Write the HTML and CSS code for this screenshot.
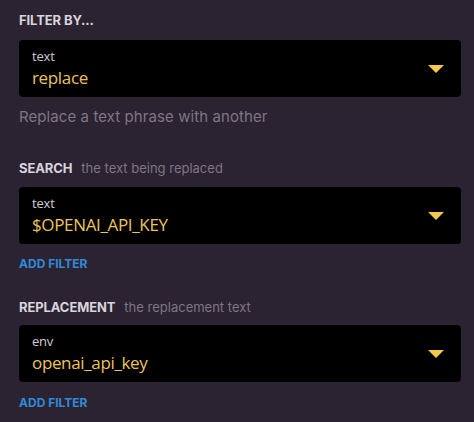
FILE: index.html
```html
<!DOCTYPE html>
<html>
<head>
<meta charset="utf-8">
<link rel="stylesheet" href="styles.css">
</head>
<body>
<div class="panel">
  <section class="section">
    <div class="heading">FILTER BY...</div>
    <div class="select">
      <div class="select-text">
        <div class="select-label">text</div>
        <div class="select-value">replace</div>
      </div>
      <svg class="caret" width="16" height="8" viewBox="0 0 16 8"><path d="M0 0H16L8 8Z" fill="#f2c94c"/></svg>
    </div>
    <div class="description">Replace a text phrase with another</div>
  </section>

  <section class="section section-search">
    <div class="heading">SEARCH <span class="hint">the text being replaced</span></div>
    <div class="select">
      <div class="select-text">
        <div class="select-label">text</div>
        <div class="select-value">$OPENAI_API_KEY</div>
      </div>
      <svg class="caret" width="16" height="8" viewBox="0 0 16 8"><path d="M0 0H16L8 8Z" fill="#f2c94c"/></svg>
    </div>
    <div class="add-filter">ADD FILTER</div>
  </section>

  <section class="section section-replacement">
    <div class="heading">REPLACEMENT <span class="hint">the replacement text</span></div>
    <div class="select">
      <div class="select-text">
        <div class="select-label">env</div>
        <div class="select-value">openai_api_key</div>
      </div>
      <svg class="caret" width="16" height="8" viewBox="0 0 16 8"><path d="M0 0H16L8 8Z" fill="#f2c94c"/></svg>
    </div>
    <div class="add-filter">ADD FILTER</div>
  </section>
</div>
</body>
</html>
```

FILE: styles.css
```css
html, body {
  margin: 0;
  padding: 0;
  background: #2b2331;
}
body {
  font-family: Inter, "Liberation Sans", sans-serif;
  width: 474px;
  height: 422px;
  overflow: hidden;
}
.panel {
  padding: 10px 13px 0 19px;
}
.heading {
  font-size: 13px;
  font-weight: 700;
  line-height: 20px;
  color: #d9d5dd;
  letter-spacing: -0.1px;
}
.hint {
  font-weight: 400;
  color: #7d7683;
  margin-left: 6px;
  letter-spacing: 0;
}
.select {
  margin-top: 10px;
  height: 57px;
  box-sizing: border-box;
  background: #000;
  border-radius: 4px;
  display: flex;
  align-items: center;
  justify-content: space-between;
  padding: 0 17px 0 13px;
}
.select-text {
  display: flex;
  flex-direction: column;
}
.select-label {
  font-family: "Open Sans", "Noto Sans", sans-serif;
  font-size: 13px;
  line-height: 17px;
  color: #d0ccd2;
  letter-spacing: -0.2px;
}
.select-value {
  font-family: "Open Sans", "Noto Sans", sans-serif;
  font-size: 17px;
  line-height: 25px;
  color: #ecc55a;
  letter-spacing: -0.35px;
}
.caret {
  margin-top: 1px;
}
.description {
  margin-top: 10px;
  font-size: 15px;
  line-height: 20px;
  color: #7d7683;
  letter-spacing: 0.08px;
}
.section-search {
  margin-top: 31px;
}
.section-search .select,
.section-replacement .select {
  margin-top: 9px;
}
.add-filter {
  margin-top: 12px;
  font-size: 12px;
  font-weight: 700;
  line-height: 16px;
  color: #2f8ad8;
}
.section-replacement {
  margin-top: 25px;
}
.section-replacement .select {
  margin-top: 8px;
}
.section-replacement .add-filter {
  margin-top: 13px;
}
```
